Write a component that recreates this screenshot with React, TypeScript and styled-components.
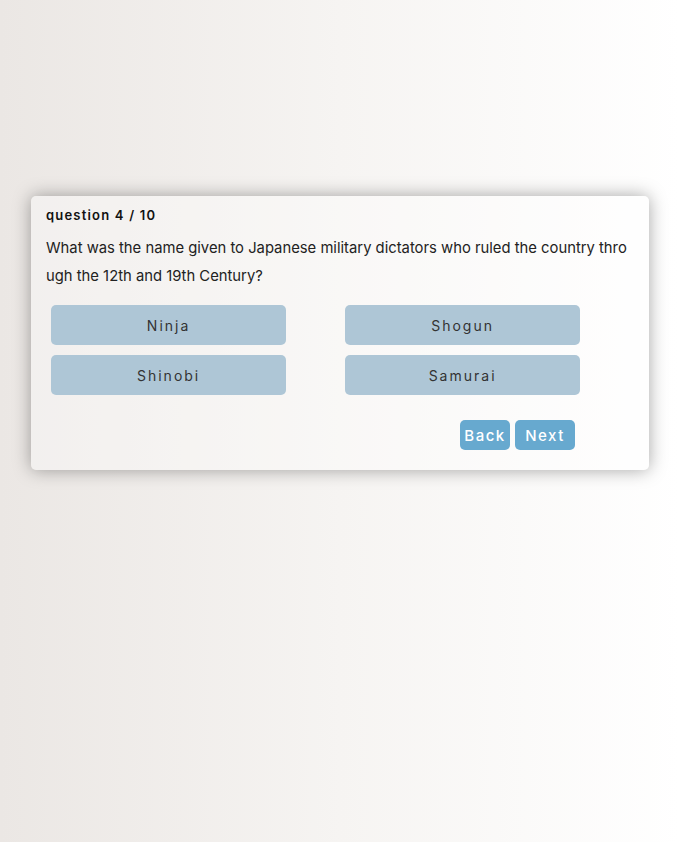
import styled, { createGlobalStyle } from "styled-components";

const GlobalStyle = createGlobalStyle`
    * {
        box-sizing: border-box;
    }
    body {
        margin: 0;
        font-family: Inter, "Open Sans", sans-serif;
    }
`;

const answers = ["Ninja", "Shogun", "Shinobi", "Samurai"];

const App = () => {
    return (
        <StyledPage>
            <GlobalStyle />
            <StyledCard>
                <StyledCount>question 4 / 10</StyledCount>
                <StyledQuestion>
                    What was the name given to Japanese military dictators who ruled the country through the 12th and 19th Century?
                </StyledQuestion>

                <StyledAnswers>
                    {answers.map((answer) => (
                        <StyledAnswer key={answer}>{answer}</StyledAnswer>
                    ))}
                </StyledAnswers>

                <StyledNav>
                    <StyledNavButton $width={50}>Back</StyledNavButton>
                    <StyledNavButton $width={60}>Next</StyledNavButton>
                </StyledNav>
            </StyledCard>
        </StyledPage>
    );
};

const StyledPage = styled.div`
    min-height: 842px;
    padding: 196px 31px 0;
    background: linear-gradient(to right, #ebe7e4 0%, #f6f4f2 50%, #ffffff 100%);
`;

const StyledCard = styled.div`
    width: 618px;
    height: 274px;
    padding: 10px 15px;
    border-radius: 5px;
    background-color: rgba(255, 255, 255, 0.35);
    box-shadow: 0 0 18px rgba(0, 0, 0, 0.35);
`;

const StyledCount = styled.p`
    margin: 0;
    font-size: 13px;
    font-weight: 600;
    letter-spacing: 1.2px;
    line-height: 18px;
    color: #111;
`;

const StyledQuestion = styled.p`
    margin: 10px 0 10px;
    font-size: 14.8px;
    line-height: 28px;
    color: #222;
    word-break: break-all;
`;

const StyledAnswers = styled.div`
    display: grid;
    grid-template-columns: 1fr 1fr;
`;

const StyledAnswer = styled.button`
    display: block;
    width: 80%;
    height: 40px;
    margin: 5px;
    border: none;
    border-radius: 5px;
    background-color: #aec6d6;
    color: #333;
    font-family: inherit;
    font-size: 14px;
    letter-spacing: 2px;
    cursor: pointer;
`;

const StyledNav = styled.div`
    display: flex;
    justify-content: flex-end;
    gap: 5px;
    margin-top: 20px;
    padding-right: 59px;
`;

const StyledNavButton = styled.button<{ $width: number }>`
    width: ${(p) => p.$width}px;
    height: 30px;
    padding: 0;
    border: none;
    border-radius: 5px;
    background-color: #67a9cf;
    color: #fff;
    font-family: inherit;
    font-size: 15px;
    font-weight: 500;
    letter-spacing: 1.5px;
    cursor: pointer;
`;

export default App;
